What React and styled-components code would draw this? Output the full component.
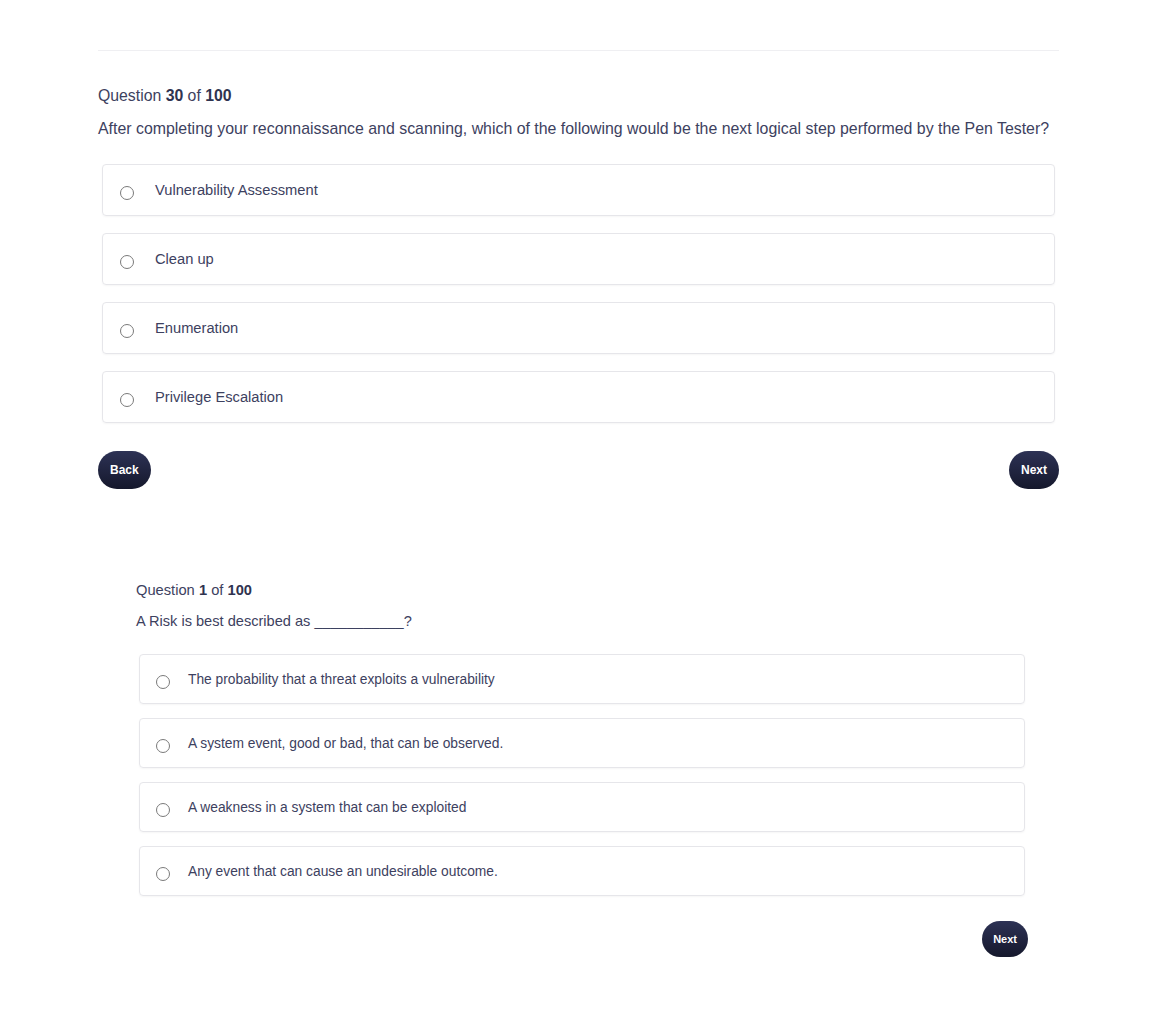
import React from 'react';
import styled, { createGlobalStyle } from 'styled-components';

const GlobalStyle = createGlobalStyle`
  html, body {
    margin: 0;
    padding: 0;
    background: #fff;
    font-family: "Liberation Sans", Arial, sans-serif;
    color: #3d4160;
  }
`;

const first = {
  number: 30,
  text: 'After completing your reconnaissance and scanning, which of the following would be the next logical step performed by the Pen Tester?',
  options: ['Vulnerability Assessment', 'Clean up', 'Enumeration', 'Privilege Escalation'],
};

const second = {
  number: 1,
  text: 'A Risk is best described as ___________?',
  options: [
    'The probability that a threat exploits a vulnerability',
    'A system event, good or bad, that can be observed.',
    'A weakness in a system that can be exploited',
    'Any event that can cause an undesirable outcome.',
  ],
};

function Quiz({ q, small, showBack }) {
  return (
    <Section $small={small}>
      <Counter $small={small}>
        Question <b>{q.number}</b> of <b>100</b>
      </Counter>
      <QuestionText $small={small}>{q.text}</QuestionText>
      <Options $small={small}>
        {q.options.map(o => (
          <Option key={o} $small={small}>
            <Radio $small={small} />
            <Label $small={small}>{o}</Label>
          </Option>
        ))}
      </Options>
      <Actions $small={small} $single={!showBack}>
        {showBack && <Button>Back</Button>}
        <Button $small={small}>Next</Button>
      </Actions>
    </Section>
  );
}

export default function App() {
  return (
    <>
      <GlobalStyle />
      <Page>
        <Top>
          <Rule />
          <Quiz q={first} showBack />
        </Top>
        <Bottom>
          <Quiz q={second} small />
        </Bottom>
      </Page>
    </>
  );
}

const Page = styled.div`
  width: 1174px;
  padding-bottom: 56px;
`;
const Top = styled.div`
  margin: 0 0 0 98px;
  width: 961px;
  padding-top: 50px;
`;
const Bottom = styled.div`
  margin: 91px 0 0 136px;
  width: 892px;
`;
const Rule = styled.div`
  height: 1px;
  background: #efeff2;
  margin-bottom: 35px;
`;
const Section = styled.div`
  display: flex;
  flex-direction: column;
`;
const Counter = styled.div`
  font-size: ${p => (p.$small ? '14.7px' : '15.8px')};
  line-height: 20px;
  b { font-weight: 700; color: #2f3350; }
`;
const QuestionText = styled.div`
  font-size: ${p => (p.$small ? '14.6px' : '15.9px')};
  line-height: 20px;
  margin-top: ${p => (p.$small ? '11px' : '13px')};
`;
const Options = styled.div`
  display: flex;
  flex-direction: column;
  gap: ${p => (p.$small ? '14px' : '17px')};
  margin: ${p => (p.$small ? '23px 3px 0 3px' : '25px 4px 0 4px')};
`;
const Option = styled.div`
  display: flex;
  align-items: center;
  height: ${p => (p.$small ? '48px' : '50px')};
  border: 1px solid #e6e6ea;
  border-radius: 4px;
  box-shadow: 0 1px 2px rgba(0, 0, 0, 0.04);
  padding-left: ${p => (p.$small ? '16px' : '17px')};
`;
const Radio = styled.span`
  width: 12px;
  height: 12px;
  border: 1px solid #7a7a7a;
  border-radius: 50%;
  margin-top: 6px;
  margin-right: ${p => (p.$small ? '18px' : '21px')};
  flex-shrink: 0;
`;
const Label = styled.span`
  font-size: ${p => (p.$small ? '13.8px' : '14.7px')};
  color: #3d4160;
`;
const Actions = styled.div`
  display: flex;
  justify-content: ${p => (p.$single ? 'flex-end' : 'space-between')};
  margin-top: ${p => (p.$small ? '25px' : '28px')};
`;
const Button = styled.button`
  height: ${p => (p.$small ? '36px' : '38px')};
  padding: 0 ${p => (p.$small ? '11px' : '12px')};
  border: none;
  border-radius: 19px;
  background: linear-gradient(180deg, #2d3255 0%, #15182c 100%);
  color: #fff;
  font-family: "Liberation Sans", Arial, sans-serif;
  font-weight: 700;
  font-size: ${p => (p.$small ? '11px' : '12px')};
  cursor: pointer;
`;
